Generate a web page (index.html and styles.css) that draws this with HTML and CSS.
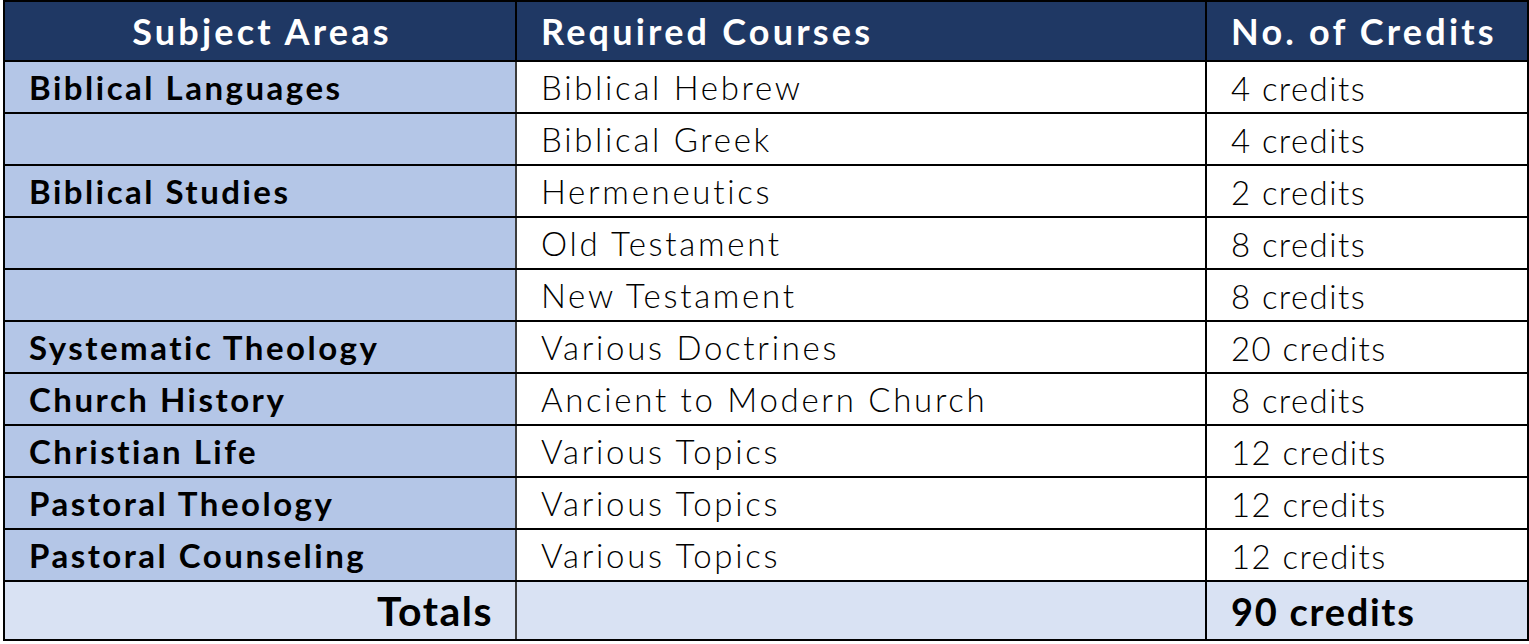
FILE: index.html
```html
<!DOCTYPE html>
<html lang="en">
<head>
<meta charset="utf-8">
<title>Required Courses</title>
<link rel="stylesheet" href="styles.css">
</head>
<body>
<table class="courses">
  <colgroup>
    <col class="c-area">
    <col class="c-course">
    <col class="c-credits">
  </colgroup>
  <thead>
    <tr class="head">
      <th class="area-h">Subject Areas</th>
      <th>Required Courses</th>
      <th>No. of Credits</th>
    </tr>
  </thead>
  <tbody>
    <tr><td class="area">Biblical Languages</td><td>Biblical Hebrew</td><td class="cr">4 credits</td></tr>
    <tr><td class="area"></td><td>Biblical Greek</td><td class="cr">4 credits</td></tr>
    <tr><td class="area">Biblical Studies</td><td>Hermeneutics</td><td class="cr">2 credits</td></tr>
    <tr><td class="area"></td><td>Old Testament</td><td class="cr">8 credits</td></tr>
    <tr><td class="area"></td><td>New Testament</td><td class="cr">8 credits</td></tr>
    <tr><td class="area">Systematic Theology</td><td>Various Doctrines</td><td class="cr">20 credits</td></tr>
    <tr><td class="area">Church History</td><td>Ancient to Modern Church</td><td class="cr">8 credits</td></tr>
    <tr><td class="area">Christian Life</td><td>Various Topics</td><td class="cr">12 credits</td></tr>
    <tr><td class="area">Pastoral Theology</td><td>Various Topics</td><td class="cr">12 credits</td></tr>
    <tr><td class="area">Pastoral Counseling</td><td>Various Topics</td><td class="cr">12 credits</td></tr>
  </tbody>
  <tfoot>
    <tr class="total"><td class="total-label">Totals</td><td></td><td class="total-val">90 credits</td></tr>
  </tfoot>
</table>
</body>
</html>
```

FILE: styles.css
```css
html, body {
  margin: 0;
  padding: 0;
  background: #ffffff;
}

body {
  padding-left: 3px;
  font-family: "Lato", "Liberation Sans", sans-serif;
}

.courses {
  border-collapse: collapse;
  width: 1526px;
  table-layout: fixed;
  color: #000;
}

.c-area { width: 512px; }
.c-course { width: 690px; }

.courses th,
.courses td {
  border: 2px solid #000;
  padding: 0 20px 0 24px;
  line-height: 1;
  text-align: left;
  vertical-align: middle;
  white-space: nowrap;
}

.courses td {
  height: 50px;
  font-size: 33px;
  font-weight: 300;
  letter-spacing: 2.7px;
}

.head th {
  height: 58px;
  background: #1f3864;
  color: #ffffff;
  font-weight: 700;
  font-size: 36px;
  letter-spacing: 3.2px;
}

.head th.area-h {
  text-align: center;
}

.courses td.area {
  background: #b4c6e7;
  font-weight: 700;
  letter-spacing: 2.5px;
  border-right-color: #3c3c3c;
}

.courses td.cr {
  height: 48px;
  padding-top: 2px;
  letter-spacing: 1.4px;
}

.total td {
  height: 57px;
  background: #d9e2f3;
}

.courses td.total-label {
  text-align: right;
  padding-right: 22px;
  font-weight: 700;
  font-size: 41px;
  letter-spacing: 1.5px;
  border-right-color: #3c3c3c;
}

.courses td.total-val {
  font-weight: 700;
  font-size: 38px;
  letter-spacing: 1.7px;
}
```
